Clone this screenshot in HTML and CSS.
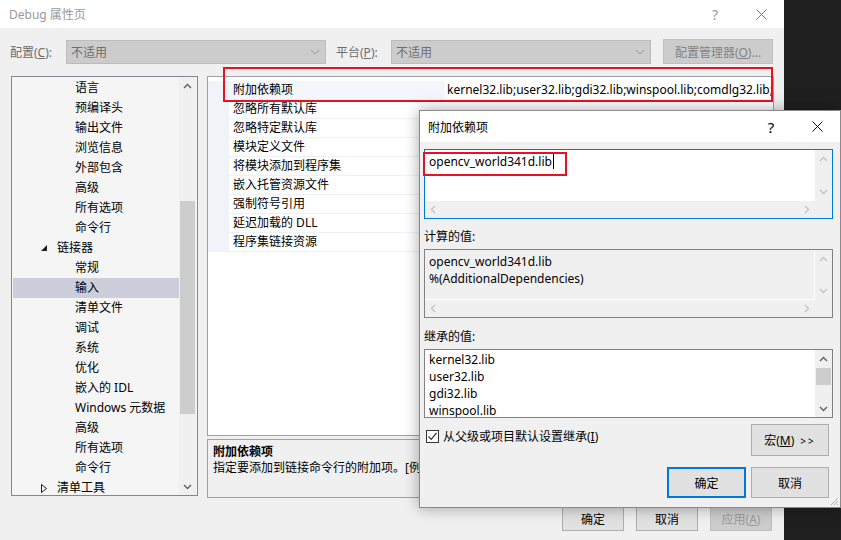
FILE: index.html
```html
<!DOCTYPE html>
<html lang="zh-CN">
<head>
    <meta charset="UTF-8">
    <title>Debug 属性页</title>
    <link rel="stylesheet" href="styles.css">
</head>
<body>
<div class="escritorio">

    <!-- ventana principal -->
    <div class="ventana">
        <div class="barra-titulo">
            <span class="titulo">Debug 属性页</span>
            <span class="boton-cap">?</span>
            <span class="boton-cap">
                <svg width="11" height="11" viewBox="0 0 11 11"><path d="M0.5 0.5 L10.5 10.5 M10.5 0.5 L0.5 10.5" stroke="#777" stroke-width="1"/></svg>
            </span>
        </div>

        <div class="fila-config">
            <span class="etiqueta">配置(<u>C</u>):</span>
            <div class="combo">
                <span>不适用</span>
                <svg width="10" height="6" viewBox="0 0 10 6"><polyline points="1,1 5,5 9,1" fill="none" stroke="#999" stroke-width="1"/></svg>
            </div>
            <span class="etiqueta plataforma">平台(<u>P</u>):</span>
            <div class="combo">
                <span>不适用</span>
                <svg width="10" height="6" viewBox="0 0 10 6"><polyline points="1,1 5,5 9,1" fill="none" stroke="#999" stroke-width="1"/></svg>
            </div>
            <div class="boton boton-gestor"><span>配置管理器(<u>O</u>)...</span></div>
        </div>

        <div class="principal">
            <div class="arbol">
                <div class="arbol-lista">
                    <div class="nodo">语言</div>
                    <div class="nodo">预编译头</div>
                    <div class="nodo">输出文件</div>
                    <div class="nodo">浏览信息</div>
                    <div class="nodo">外部包含</div>
                    <div class="nodo">高级</div>
                    <div class="nodo">所有选项</div>
                    <div class="nodo">命令行</div>
                    <div class="nodo grupo">
                        <span class="flecha"><svg width="6" height="6" viewBox="0 0 6 6"><polygon points="6,0 6,6 0,6" fill="#1e1e1e"/></svg></span><span>链接器</span>
                    </div>
                    <div class="nodo">常规</div>
                    <div class="nodo activo">输入</div>
                    <div class="nodo">清单文件</div>
                    <div class="nodo">调试</div>
                    <div class="nodo">系统</div>
                    <div class="nodo">优化</div>
                    <div class="nodo">嵌入的 IDL</div>
                    <div class="nodo">Windows 元数据</div>
                    <div class="nodo">高级</div>
                    <div class="nodo">所有选项</div>
                    <div class="nodo">命令行</div>
                    <div class="nodo grupo">
                        <span class="flecha"><svg width="6" height="9" viewBox="0 0 6 9"><polygon points="0.5,0.5 5.5,4.5 0.5,8.5" fill="none" stroke="#1e1e1e" stroke-width="1"/></svg></span><span>清单工具</span>
                    </div>
                </div>
                <div class="barra-scroll">
                    <div class="scroll-btn"><svg width="9" height="6" viewBox="0 0 9 6"><polyline points="1,5 4.5,1.5 8,5" fill="none" stroke="#606060" stroke-width="1.4"/></svg></div>
                    <div class="scroll-pista"><div class="scroll-pulgar arbol-pulgar"></div></div>
                    <div class="scroll-btn"><svg width="9" height="6" viewBox="0 0 9 6"><polyline points="1,1 4.5,4.5 8,1" fill="none" stroke="#606060" stroke-width="1.4"/></svg></div>
                </div>
            </div>

            <div class="columna-derecha">
                <div class="rejilla">
                    <div class="fila-prop seleccionada">
                        <span class="margen"></span>
                        <span class="nombre">附加依赖项</span>
                        <span class="valor">kernel32.lib;user32.lib;gdi32.lib;winspool.lib;comdlg32.lib;advapi32.lib;shell32.lib</span>
                    </div>
                    <div class="fila-prop"><span class="margen"></span><span class="nombre">忽略所有默认库</span><span class="valor"></span></div>
                    <div class="fila-prop"><span class="margen"></span><span class="nombre">忽略特定默认库</span><span class="valor"></span></div>
                    <div class="fila-prop"><span class="margen"></span><span class="nombre">模块定义文件</span><span class="valor"></span></div>
                    <div class="fila-prop"><span class="margen"></span><span class="nombre">将模块添加到程序集</span><span class="valor"></span></div>
                    <div class="fila-prop"><span class="margen"></span><span class="nombre">嵌入托管资源文件</span><span class="valor"></span></div>
                    <div class="fila-prop"><span class="margen"></span><span class="nombre">强制符号引用</span><span class="valor"></span></div>
                    <div class="fila-prop"><span class="margen"></span><span class="nombre">延迟加载的 DLL</span><span class="valor"></span></div>
                    <div class="fila-prop"><span class="margen"></span><span class="nombre">程序集链接资源</span><span class="valor"></span></div>
                </div>
                <div class="descripcion">
                    <div class="desc-titulo">附加依赖项</div>
                    <div>指定要添加到链接命令行的附加项。[例如 kernel32.lib]</div>
                </div>
            </div>
        </div>

        <div class="pie">
            <div class="boton">确定</div>
            <div class="boton">取消</div>
            <div class="boton deshabilitado"><span>应用(<u>A</u>)</span></div>
        </div>
    </div>

    <!-- marca roja sobre la fila -->
    <div class="marca marca-fila"></div>

    <!-- dialogo flotante -->
    <div class="dialogo">
        <div class="dialogo-titulo">
            <span class="titulo">附加依赖项</span>
            <span class="boton-cap">?</span>
            <span class="boton-cap">
                <svg width="11" height="11" viewBox="0 0 11 11"><path d="M0.5 0.5 L10.5 10.5 M10.5 0.5 L0.5 10.5" stroke="#111" stroke-width="1"/></svg>
            </span>
        </div>
        <div class="dialogo-cuerpo">
            <div class="caja caja-edicion">
                <div class="texto">opencv_world341d.lib<span class="cursor"></span></div>
                <div class="vscroll inactivo">
                    <svg width="9" height="6" viewBox="0 0 9 6"><polyline points="1,5 4.5,1.5 8,5" fill="none" stroke="currentColor" stroke-width="1.3"/></svg>
                    <svg width="9" height="6" viewBox="0 0 9 6"><polyline points="1,1 4.5,4.5 8,1" fill="none" stroke="currentColor" stroke-width="1.3"/></svg>
                </div>
                <div class="hscroll inactivo">
                    <svg width="6" height="9" viewBox="0 0 6 9"><polyline points="5,1 1.5,4.5 5,8" fill="none" stroke="currentColor" stroke-width="1.3"/></svg>
                    <svg width="6" height="9" viewBox="0 0 6 9"><polyline points="1,1 4.5,4.5 1,8" fill="none" stroke="currentColor" stroke-width="1.3"/></svg>
                </div>
                <div class="esquina"></div>
            </div>

            <div class="etiqueta-caja">计算的值:</div>
            <div class="caja caja-calculada">
                <div class="texto">
                    <div>opencv_world341d.lib</div>
                    <div>%(AdditionalDependencies)</div>
                </div>
                <div class="vscroll inactivo">
                    <svg width="9" height="6" viewBox="0 0 9 6"><polyline points="1,5 4.5,1.5 8,5" fill="none" stroke="currentColor" stroke-width="1.3"/></svg>
                    <svg width="9" height="6" viewBox="0 0 9 6"><polyline points="1,1 4.5,4.5 8,1" fill="none" stroke="currentColor" stroke-width="1.3"/></svg>
                </div>
                <div class="hscroll inactivo">
                    <svg width="6" height="9" viewBox="0 0 6 9"><polyline points="5,1 1.5,4.5 5,8" fill="none" stroke="currentColor" stroke-width="1.3"/></svg>
                    <svg width="6" height="9" viewBox="0 0 6 9"><polyline points="1,1 4.5,4.5 1,8" fill="none" stroke="currentColor" stroke-width="1.3"/></svg>
                </div>
                <div class="esquina"></div>
            </div>

            <div class="etiqueta-caja segunda">继承的值:</div>
            <div class="caja caja-heredada">
                <div class="texto">
                    <div>kernel32.lib</div>
                    <div>user32.lib</div>
                    <div>gdi32.lib</div>
                    <div>winspool.lib</div>
                    <div>comdlg32.lib</div>
                </div>
                <div class="barra-scroll">
                    <div class="scroll-btn"><svg width="9" height="6" viewBox="0 0 9 6"><polyline points="1,5 4.5,1.5 8,5" fill="none" stroke="#606060" stroke-width="1.4"/></svg></div>
                    <div class="scroll-pista"><div class="scroll-pulgar lista-pulgar"></div></div>
                    <div class="scroll-btn"><svg width="9" height="6" viewBox="0 0 9 6"><polyline points="1,1 4.5,4.5 8,1" fill="none" stroke="#606060" stroke-width="1.4"/></svg></div>
                </div>
            </div>

            <div class="fila-heredar">
                <label class="casilla">
                    <span class="caja-check">
                        <svg width="11" height="11" viewBox="0 0 11 11"><polyline points="1.5,5.5 4.2,8.3 9.5,2" fill="none" stroke="#333" stroke-width="1.2"/></svg>
                    </span>
                    <span>从父级或项目默认设置继承(<u>I</u>)</span>
                </label>
                <div class="boton boton-macro"><span>宏(<u>M</u>)<span class="mayor">&gt;&gt;</span></span></div>
            </div>

            <div class="fila-botones">
                <div class="boton boton-dialogo predeterminado">确定</div>
                <div class="boton boton-dialogo">取消</div>
            </div>
        </div>
        <svg class="agarre" width="10" height="10" viewBox="0 0 10 10">
            <path d="M9 2 L2 9 M9 5 L5 9 M9 8 L8 9" stroke="#b0b0b0" stroke-width="1"/>
        </svg>
    </div>

    <div class="marca marca-texto"></div>
</div>
</body>
</html>
```

FILE: styles.css
```css
/* Ventana de propiedades de Visual Studio */
body {
    margin: 0;
    background: #1f1f1f;
    font-family: "Noto Sans", "Noto Sans CJK SC", sans-serif;
    font-size: 12px;
    color: #000;
}

.escritorio {
    position: relative;
    width: 841px;
    height: 540px;
    overflow: hidden;
}

.ventana {
    width: 784px;
    height: 540px;
    background: #f0f0f0;
}

.barra-titulo {
    height: 28px;
    background: #fff;
    display: flex;
    align-items: center;
    padding-left: 9px;
    color: #999;
}

.titulo {
    flex: 1;
}

.boton-cap {
    width: 46px;
    height: 100%;
    display: flex;
    align-items: center;
    justify-content: center;
    font-size: 14px;
}

/* fila de configuracion */
.fila-config {
    display: flex;
    align-items: center;
    height: 25px;
    margin-top: 11px;
    padding-left: 10px;
    color: #6d6d6d;
}

.etiqueta {
    width: 56px;
}

.plataforma {
    margin-left: 10px;
    width: 55px;
}

.combo {
    box-sizing: border-box;
    width: 260px;
    height: 24px;
    background: #cccccc;
    border: 1px solid #bcbcbc;
    display: flex;
    align-items: center;
    justify-content: space-between;
    padding: 0 5px 0 4px;
}

.boton {
    box-sizing: border-box;
    background: #e1e1e1;
    border: 1px solid #adadad;
    display: flex;
    align-items: center;
    justify-content: center;
    width: 62px;
    height: 25px;
}

.boton-gestor {
    width: 110px;
    margin-left: 12px;
    background: #cccccc;
    border-color: #bfbfbf;
    color: #838383;
}

.deshabilitado {
    background: #cccccc;
    border-color: #bfbfbf;
    color: #9a9a9a;
}

/* zona principal */
.principal {
    display: flex;
    gap: 9px;
    height: 422px;
    margin-top: 12px;
    padding-left: 11px;
}

.arbol {
    box-sizing: border-box;
    width: 187px;
    height: 420px;
    border: 1px solid #828790;
    background: #f5f5f5;
    display: flex;
}

.arbol-lista {
    flex: 1;
    overflow: hidden;
    padding-top: 1px;
}

.nodo {
    height: 20px;
    line-height: 20px;
    padding-left: 62px;
    margin-left: 1px;
    white-space: nowrap;
}

.nodo.grupo {
    padding-left: 28px;
    display: flex;
    align-items: center;
}

.flecha {
    width: 16px;
    display: flex;
    align-items: center;
}

.nodo.activo {
    background: #cccedb;
}

.barra-scroll {
    width: 17px;
    background: #f0f0f0;
    display: flex;
    flex-direction: column;
}

.arbol .barra-scroll {
    margin-right: 1px;
}

.scroll-btn {
    height: 17px;
    display: flex;
    align-items: center;
    justify-content: center;
}

.scroll-pista {
    flex: 1;
}

.scroll-pulgar {
    background: #cdcdcd;
    margin: 0 1px;
}

.arbol-pulgar {
    margin-top: 107px;
    height: 213px;
}

.lista-pulgar {
    margin-top: 1px;
    height: 17px;
}

/* rejilla de propiedades */
.columna-derecha {
    width: 567px;
    display: flex;
    flex-direction: column;
    gap: 3px;
}

.rejilla {
    box-sizing: border-box;
    height: 360px;
    border: 1px solid #a0a0a0;
    background: #fff;
    padding-top: 4px;
    overflow: hidden;
}

.fila-prop {
    display: flex;
    height: 19px;
    line-height: 18px;
}

.margen {
    width: 21px;
    background: #f0f4f9;
}

.nombre {
    box-sizing: border-box;
    width: 216px;
    padding-left: 4px;
    border-bottom: 1px solid #eef1f6;
}

.valor {
    flex: 1;
    padding-left: 2px;
    white-space: nowrap;
    overflow: hidden;
    border-bottom: 1px solid #eef1f6;
}

.seleccionada .nombre {
    background: #f3f6fa;
}

.descripcion {
    box-sizing: border-box;
    height: 59px;
    border: 1px solid #a0a0a0;
    background: #f0f0f0;
    padding: 4px 5px;
    line-height: 16px;
    white-space: nowrap;
    overflow: hidden;
}

.desc-titulo {
    font-weight: bold;
}

.pie {
    display: flex;
    justify-content: flex-end;
    gap: 12px;
    padding-right: 12px;
    margin-top: 8px;
}

/* marcas rojas */
.marca {
    position: absolute;
    box-sizing: border-box;
    border: 2px solid #e81123;
}

.marca-fila {
    left: 223px;
    top: 67px;
    width: 550px;
    height: 35px;
}

.marca-texto {
    left: 423px;
    top: 152px;
    width: 144px;
    height: 24px;
}

/* dialogo */
.dialogo {
    position: absolute;
    left: 419px;
    top: 110px;
    width: 422px;
    height: 398px;
    box-sizing: border-box;
    border: 1px solid #8a8a8a;
    background: #f0f0f0;
    box-shadow: 0 0 14px rgba(0, 0, 0, 0.35);
}

.dialogo-titulo {
    height: 31px;
    background: #fff;
    display: flex;
    align-items: center;
    padding-left: 8px;
}

.dialogo-titulo .boton-cap {
    font-size: 15px;
}

.dialogo-cuerpo {
    padding: 0 7px 0 4px;
}

.caja {
    box-sizing: border-box;
    height: 69px;
    border: 1px solid #828282;
    display: grid;
    grid-template-columns: 1fr 17px;
    grid-template-rows: 1fr 17px;
    overflow: hidden;
}

.caja .texto {
    padding: 3px 4px;
    line-height: 17px;
    white-space: nowrap;
    overflow: hidden;
}

.caja-edicion {
    margin-top: 7px;
    height: 70px;
    border-color: #0078d7;
}

.caja-edicion .texto {
    background: #fff;
    padding-top: 3px;
}

.cursor {
    display: inline-block;
    width: 1px;
    height: 15px;
    background: #000;
    vertical-align: -3px;
    margin-left: 1px;
}

.caja-calculada .texto {
    background: #f0f0f0;
    border-right: 1px solid #fff;
    border-bottom: 1px solid #fff;
}

.caja-heredada {
    grid-template-rows: 1fr;
    background: #fff;
}

.caja-heredada .texto {
    padding-top: 1px;
}

.vscroll {
    display: flex;
    flex-direction: column;
    justify-content: space-between;
    align-items: center;
    padding: 6px 0 6px;
    background: #f0f0f0;
}

.hscroll {
    display: flex;
    justify-content: space-between;
    align-items: center;
    padding: 0 5px;
    background: #f0f0f0;
}

.inactivo {
    color: #c2c2c2;
}

.esquina {
    background: #f0f0f0;
}

.etiqueta-caja {
    margin-top: 10px;
    height: 16px;
    line-height: 16px;
    margin-bottom: 4px;
}

.etiqueta-caja.segunda {
    margin-top: 11px;
}

.fila-heredar {
    display: flex;
    justify-content: space-between;
    align-items: flex-start;
    margin-top: 6px;
    margin-right: 4px;
}

.casilla {
    display: flex;
    align-items: center;
    height: 13px;
    line-height: 13px;
    margin-top: 6px;
    margin-left: 2px;
    gap: 4px;
}

.caja-check {
    box-sizing: border-box;
    width: 13px;
    height: 13px;
    border: 1px solid #333;
    background: #fff;
    display: flex;
    align-items: center;
    justify-content: center;
}

.boton-macro {
    width: 78px;
    height: 32px;
}

.mayor {
    font-size: 10px;
    margin-left: 6px;
    letter-spacing: 2px;
}

.fila-botones {
    display: flex;
    justify-content: flex-end;
    gap: 5px;
    margin-top: 11px;
    margin-right: 4px;
}

.boton-dialogo {
    width: 78px;
    height: 31px;
}

.predeterminado {
    width: 79px;
    border: 2px solid #0078d7;
}

.agarre {
    position: absolute;
    right: 1px;
    bottom: 1px;
}
```
